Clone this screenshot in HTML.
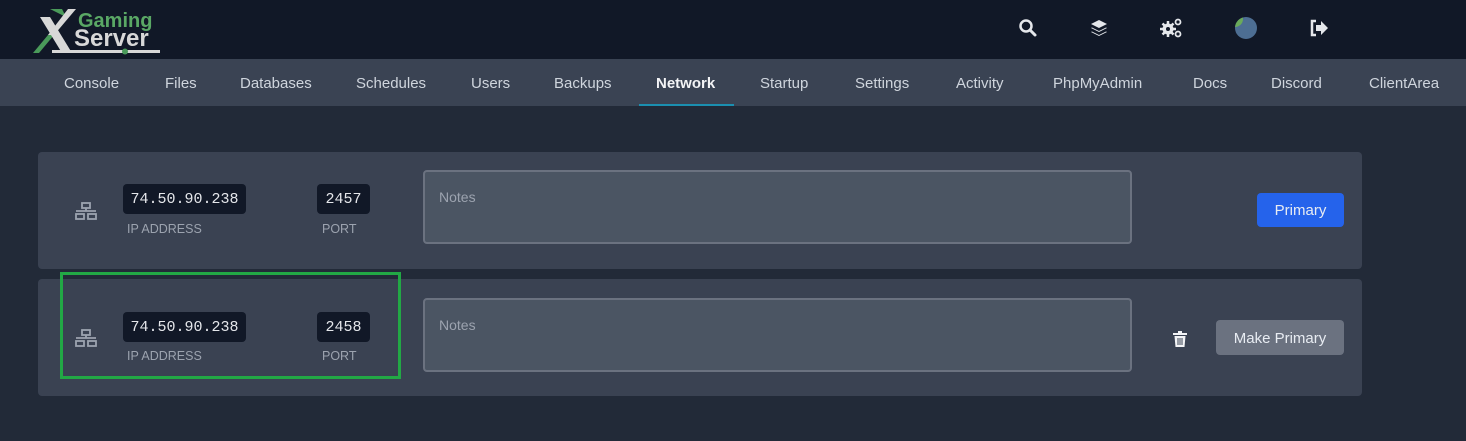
<!DOCTYPE html>
<html><head><style>
body{margin:0;width:1466px;height:441px;background:#222a38;font-family:"Liberation Sans",sans-serif;position:relative;overflow:hidden}
.top{position:absolute;left:0;top:0;width:1466px;height:59px;background:#111827}
.nav{position:absolute;left:0;top:59px;width:1466px;height:47px;background:#3a4353}
.nav span{position:absolute;top:16px;font-size:15px;color:#cfd5dd}
.ul{position:absolute;left:639px;top:104px;width:95px;height:2px;background:#1b8fb0}
.card{position:absolute;left:38px;width:1324px;height:117px;background:#3a4252;border-radius:4px}
.notes{position:absolute;left:385px;width:709px;height:74px;background:#4b5563;border:2px solid #6b7280;border-radius:4px;color:#9ca3af;font-size:14px;box-sizing:border-box;padding:17px 14px}
.box{position:absolute;background:#111827;color:#e5e7eb;font-family:"Liberation Mono",monospace;font-size:15px;border-radius:4px;height:30px;line-height:31px;text-align:center}
.lbl{position:absolute;font-size:12.5px;color:#9ca3af}
.btn{position:absolute;border-radius:4px;color:#e8ecf2;font-size:15px;text-align:center}
.ic{position:absolute}
</style></head><body>
<div class="top">
<svg style="position:absolute;left:28px;top:5px" width="135" height="50" viewBox="0 0 135 50">
<path d="M5 48 L30 18 L36 18 L11 48Z M22 4 L34 4 L38 12 Z" fill="#4a9a5a"/>
<path d="M12 12 L22 12 L44 48 L34 48Z M40 4 L48 4 L26 30 L20 30Z" fill="#d8d8d8"/>
<text x="50" y="22" font-family="Liberation Sans" font-weight="bold" font-size="20" fill="#5aa865">Gaming</text>
<text x="46" y="41" font-family="Liberation Sans" font-weight="bold" font-size="24" fill="#d8d8d8">Server</text>
<rect x="24" y="45" width="108" height="3" fill="#d8d8d8"/><circle cx="97" cy="46.5" r="3" fill="#4a9a5a"/>
</svg>
<svg class="ic" style="left:1018px;top:18px" width="20" height="20" viewBox="0 0 20 20"><circle cx="8" cy="8" r="5.5" stroke="#e5e7eb" stroke-width="2.5" fill="none"/><path d="M12 12 L17 17" stroke="#e5e7eb" stroke-width="3" stroke-linecap="round"/></svg>
<svg class="ic" style="left:1089px;top:18px" width="20" height="20" viewBox="0 0 20 20"><path d="M10 2 L18 6 L10 10 L2 6Z M3 9.5 L10 13 L17 9.5 L18 10 L10 14 L2 10Z M3 13.5 L10 17 L17 13.5 L18 14 L10 18 L2 14Z" fill="#e5e7eb"/></svg>
<svg class="ic" style="left:1159px;top:17px" width="24" height="22" viewBox="0 0 24 22"><circle cx="9" cy="12" r="5.5" fill="#e5e7eb"/><circle cx="9" cy="12" r="2" fill="#111827"/><path d="M9 4v3M9 17v3M1 12h3M14 12h3M3.5 6.5l2 2M12.5 15.5l2 2M3.5 17.5l2-2M12.5 8.5l2-2" stroke="#e5e7eb" stroke-width="2.5"/><circle cx="19" cy="5" r="2.5" stroke="#e5e7eb" stroke-width="1.8" fill="none"/><circle cx="19" cy="17" r="2.5" stroke="#e5e7eb" stroke-width="1.8" fill="none"/></svg>
<div style="position:absolute;left:1235px;top:17px;width:22px;height:22px;border-radius:50%;background:#4d6e93;overflow:hidden"><div style="position:absolute;left:0;top:0;width:8px;height:10px;background:#6aaa5a;border-radius:0 0 8px 0"></div></div>
<svg class="ic" style="left:1309px;top:19px" width="20" height="18" viewBox="0 0 20 18"><path d="M7 2H3v14h4" stroke="#e5e7eb" stroke-width="2.5" fill="none"/><path d="M7 6h5V2l7 7-7 7v-4H7Z" fill="#e5e7eb"/></svg>
</div>
<div class="nav">
<span style="left:64px">Console</span><span style="left:165px">Files</span><span style="left:240px">Databases</span><span style="left:356px">Schedules</span><span style="left:471px">Users</span><span style="left:554px">Backups</span><span style="left:656px;color:#f3f4f6;font-weight:bold">Network</span><span style="left:760px">Startup</span><span style="left:855px">Settings</span><span style="left:956px">Activity</span><span style="left:1053px">PhpMyAdmin</span><span style="left:1193px">Docs</span><span style="left:1271px">Discord</span><span style="left:1369px">ClientArea</span>
</div>
<div class="ul"></div>

<div class="card" style="top:152px">
<svg class="ic" style="left:37px;top:50px" width="22" height="18" viewBox="0 0 22 18"><g stroke="#9ca3af" stroke-width="1.8" fill="none"><rect x="7" y="1" width="8" height="5"/><rect x="1" y="12" width="8" height="5"/><rect x="13" y="12" width="8" height="5"/><path d="M11 6v3M1 9h20"/></g></svg>
<div class="box" style="left:85px;top:32px;width:123px">74.50.90.238</div>
<div class="lbl" style="left:89px;top:70px">IP ADDRESS</div>
<div class="box" style="left:279px;top:32px;width:53px">2457</div>
<div class="lbl" style="left:284px;top:70px">PORT</div>
<div class="notes" style="top:18px">Notes</div>
<div class="btn" style="left:1219px;top:41px;width:87px;height:34px;line-height:36px;background:#2563eb">Primary</div>
</div>

<div class="card" style="top:279px">
<svg class="ic" style="left:37px;top:50px" width="22" height="18" viewBox="0 0 22 18"><g stroke="#9ca3af" stroke-width="1.8" fill="none"><rect x="7" y="1" width="8" height="5"/><rect x="1" y="12" width="8" height="5"/><rect x="13" y="12" width="8" height="5"/><path d="M11 6v3M1 9h20"/></g></svg>
<div class="box" style="left:85px;top:33px;width:123px">74.50.90.238</div>
<div class="lbl" style="left:89px;top:70px">IP ADDRESS</div>
<div class="box" style="left:279px;top:33px;width:53px">2458</div>
<div class="lbl" style="left:284px;top:70px">PORT</div>
<div class="notes" style="top:19px">Notes</div>
<svg class="ic" style="left:1135px;top:52px" width="14" height="16" viewBox="0 0 14 16"><path d="M0 2h14v2H0Z M5 0h4v2H5Z M1.5 5h11l-1 11h-9Z" fill="#f3f4f6"/><path d="M5 7v7M7 7v7M9 7v7" stroke="#3a4252" stroke-width="1"/></svg>
<div class="btn" style="left:1178px;top:41px;width:128px;height:35px;line-height:37px;background:#6b7280">Make Primary</div>
</div>
<div style="position:absolute;left:60px;top:272px;width:335px;height:101px;border:3px solid #22a845"></div>
</body></html>
